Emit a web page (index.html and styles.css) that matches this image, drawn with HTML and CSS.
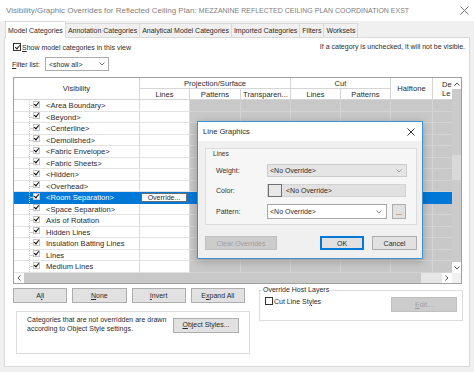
FILE: index.html
```html
<!DOCTYPE html>
<html lang="en">
<head>
<meta charset="UTF-8">
<meta name="viewport" content="width=device-width, initial-scale=1.0">
<title>Visibility/Graphic Overrides</title>
<link rel="stylesheet" href="styles.css">
</head>
<body>
<div class="win">

    <div class="titlebar">
        <span class="title">Visibility/Graphic Overrides for Reflected Ceiling Plan: <span class="caps">MEZZANINE REFLECTED CEILING PLAN COORDINATION EXST</span></span>
        <svg class="xclose" width="9" height="9" viewBox="0 0 9 9"><path d="M0.5 0.5L8.5 8.5M8.5 0.5L0.5 8.5" stroke="#777" stroke-width="1"/></svg>
    </div>

    <div class="tabs">
        <span class="tab on">Model Categories</span>
        <span class="tab">Annotation Categories</span>
        <span class="tab">Analytical Model Categories</span>
        <span class="tab">Imported Categories</span>
        <span class="tab">Filters</span>
        <span class="tab">Worksets</span>
    </div>

    <div class="panel">
        <div class="toprow">
            <span class="chk"><span class="cb on"></span><u>S</u>how model categories in this view</span>
            <span class="hint">If a category is unchecked, it will not be visible.</span>
        </div>

        <div class="filter">
            <span class="flabel"><u>F</u>ilter list:</span>
            <span class="select">&lt;show all&gt;<svg width="6" height="4" viewBox="0 0 6 4"><path d="M0.5 0.5L3 3L5.5 0.5" fill="none" stroke="#777"/></svg></span>
        </div>

        <!-- category grid -->
        <div class="grid">
            <div class="gmain">
                <div class="cols">
                    <div class="ghead">
                        <div class="h vis-h">Visibility</div>
                        <div class="h proj">Projection/Surface</div>
                        <div class="h cut">Cut</div>
                        <div class="h half">Halftone</div>
                        <div class="h det">De<br>Le</div>
                        <div class="h s2">Lines</div>
                        <div class="h s3">Patterns</div>
                        <div class="h s4">Transparen...</div>
                        <div class="h s5">Lines</div>
                        <div class="h s6">Patterns</div>
                    </div>
                    <div class="gbody">
                        <div class="r"><div class="c vis"><span class="tree"></span><span class="gcb"></span>&lt;Area Boundary&gt;</div><div class="c"></div><div class="c g"></div><div class="c g"></div><div class="c g"></div><div class="c g"></div><div class="c g"></div><div class="c g last"></div></div>
                        <div class="r"><div class="c vis"><span class="tree"></span><span class="gcb"></span>&lt;Beyond&gt;</div><div class="c"></div><div class="c g"></div><div class="c g"></div><div class="c g"></div><div class="c g"></div><div class="c g"></div><div class="c g last"></div></div>
                        <div class="r"><div class="c vis"><span class="tree"></span><span class="gcb"></span>&lt;Centerline&gt;</div><div class="c"></div><div class="c g"></div><div class="c g"></div><div class="c g"></div><div class="c g"></div><div class="c g"></div><div class="c g last"></div></div>
                        <div class="r"><div class="c vis"><span class="tree"></span><span class="gcb"></span>&lt;Demolished&gt;</div><div class="c"></div><div class="c g"></div><div class="c g"></div><div class="c g"></div><div class="c g"></div><div class="c g"></div><div class="c g last"></div></div>
                        <div class="r"><div class="c vis"><span class="tree"></span><span class="gcb"></span>&lt;Fabric Envelope&gt;</div><div class="c"></div><div class="c g"></div><div class="c g"></div><div class="c g"></div><div class="c g"></div><div class="c g"></div><div class="c g last"></div></div>
                        <div class="r"><div class="c vis"><span class="tree"></span><span class="gcb"></span>&lt;Fabric Sheets&gt;</div><div class="c"></div><div class="c g"></div><div class="c g"></div><div class="c g"></div><div class="c g"></div><div class="c g"></div><div class="c g last"></div></div>
                        <div class="r"><div class="c vis"><span class="tree"></span><span class="gcb"></span>&lt;Hidden&gt;</div><div class="c"></div><div class="c g"></div><div class="c g"></div><div class="c g"></div><div class="c g"></div><div class="c g"></div><div class="c g last"></div></div>
                        <div class="r"><div class="c vis"><span class="tree"></span><span class="gcb"></span>&lt;Overhead&gt;</div><div class="c"></div><div class="c g"></div><div class="c g"></div><div class="c g"></div><div class="c g"></div><div class="c g"></div><div class="c g last"></div></div>
                        <div class="r sel"><div class="c vis"><span class="tree"></span><span class="gcb"></span>&lt;Room Separation&gt;</div><div class="c ovr"><span class="obtn">Override...</span></div><div class="c g"></div><div class="c g"></div><div class="c g"></div><div class="c g"></div><div class="c g"></div><div class="c g last"></div></div>
                        <div class="r"><div class="c vis"><span class="tree"></span><span class="gcb"></span>&lt;Space Separation&gt;</div><div class="c"></div><div class="c g"></div><div class="c g"></div><div class="c g"></div><div class="c g"></div><div class="c g"></div><div class="c g last"></div></div>
                        <div class="r"><div class="c vis"><span class="tree"></span><span class="gcb"></span>Axis of Rotation</div><div class="c"></div><div class="c g"></div><div class="c g"></div><div class="c g"></div><div class="c g"></div><div class="c g"></div><div class="c g last"></div></div>
                        <div class="r"><div class="c vis"><span class="tree"></span><span class="gcb"></span>Hidden Lines</div><div class="c"></div><div class="c g"></div><div class="c g"></div><div class="c g"></div><div class="c g"></div><div class="c g"></div><div class="c g last"></div></div>
                        <div class="r"><div class="c vis"><span class="tree"></span><span class="gcb"></span>Insulation Batting Lines</div><div class="c"></div><div class="c g"></div><div class="c g"></div><div class="c g"></div><div class="c g"></div><div class="c g"></div><div class="c g last"></div></div>
                        <div class="r"><div class="c vis"><span class="tree"></span><span class="gcb"></span>Lines</div><div class="c"></div><div class="c g"></div><div class="c g"></div><div class="c g"></div><div class="c g"></div><div class="c g"></div><div class="c g last"></div></div>
                        <div class="r"><div class="c vis"><span class="tree"></span><span class="gcb"></span>Medium Lines</div><div class="c"></div><div class="c g"></div><div class="c g"></div><div class="c g"></div><div class="c g"></div><div class="c g"></div><div class="c g last"></div></div>
                    </div>
                </div>
                <div class="vscroll">
                    <span class="sb"><svg width="6" height="4" viewBox="0 0 6 4"><path d="M0.5 3.5L3 1L5.5 3.5" fill="none" stroke="#555"/></svg></span>
                    <span class="vtrack"><span class="vthumb"></span></span>
                    <span class="sb"><svg width="6" height="4" viewBox="0 0 6 4"><path d="M0.5 0.5L3 3L5.5 0.5" fill="none" stroke="#555"/></svg></span>
                </div>
            </div>
            <div class="hscroll">
                <span class="sb"><svg width="4" height="6" viewBox="0 0 4 6"><path d="M3.5 0.5L1 3L3.5 5.5" fill="none" stroke="#555"/></svg></span>
                <span class="hthumb"></span>
                <span class="htrack"></span>
                <span class="sb"><svg width="4" height="6" viewBox="0 0 4 6"><path d="M0.5 0.5L3 3L0.5 5.5" fill="none" stroke="#555"/></svg></span>
                <span class="corner"></span>
            </div>
        </div>

        <div class="lower">
            <div class="lcol">
                <div class="btnrow">
                    <span class="btn">A<u>l</u>l</span>
                    <span class="btn"><u>N</u>one</span>
                    <span class="btn"><u>I</u>nvert</span>
                    <span class="btn">E<u>x</u>pand All</span>
                </div>
                <div class="note">
                    <span class="notetext">Categories that are not overridden are drawn<br>according to Object Style settings.</span>
                    <span class="btn objbtn"><u>O</u>bject Styles...</span>
                </div>
            </div>
            <fieldset class="hostgrp">
                <legend>Override Host Layers</legend>
                <div class="hostrow">
                    <span class="chk"><span class="cb"></span>Cut Line St<u>y</u>les</span>
                    <span class="btn dis editbtn"><u>E</u>dit...</span>
                </div>
            </fieldset>
        </div>
    </div>

    <!-- modal line graphics dialog -->
    <div class="dlg">
        <div class="dtitle">
            <span>Line Graphics</span>
            <svg width="8" height="8" viewBox="0 0 8 8"><path d="M0.5 0.5L7.5 7.5M7.5 0.5L0.5 7.5" stroke="#333" stroke-width="1"/></svg>
        </div>
        <div class="dbody">
            <div class="dgroup">
                <div class="glabel">Lines</div>
                <div class="frow"><span class="flab">Weight:</span><span class="dsel">&lt;No Override&gt;<svg width="6" height="4" viewBox="0 0 6 4"><path d="M0.5 0.5L3 3L5.5 0.5" fill="none" stroke="#999"/></svg></span></div>
                <div class="frow"><span class="flab">Color:</span><span class="colorbtn"><span class="swatch"></span>&lt;No Override&gt;</span></div>
                <div class="frow tall"><span class="flab">Pattern:</span><span class="dsel pat">&lt;No Override&gt;<svg width="6" height="4" viewBox="0 0 6 4"><path d="M0.5 0.5L3 3L5.5 0.5" fill="none" stroke="#888"/></svg></span><span class="btn dots">...</span></div>
            </div>
            <div class="dbtns">
                <span class="btn dis clear">Clear Overrides</span>
                <span class="btn ok">OK</span>
                <span class="btn cancel">Cancel</span>
            </div>
        </div>
    </div>

</div>
</body>
</html>
```

FILE: styles.css
```css
* { box-sizing: border-box; }
body {
    margin: 0;
    font-family: "Liberation Sans", Arial, sans-serif;
    font-size: 7px;
    color: #2b2b2b;
}
u { text-underline-offset: 1px; }

.win {
    width: 474px;
    height: 372px;
    background: #f0f0f0;
    position: relative;
    overflow: hidden;
}

/* title + tabs */
.titlebar {
    height: 21px;
    background: #fff;
    display: flex;
    align-items: center;
    padding: 0 5px 0 6px;
}
.title {
    flex: 1;
    font-size: 8px;
    color: #808080;
    white-space: nowrap;
    overflow: hidden;
}
.title .caps { font-size: 7px; }
.tabs {
    display: flex;
    align-items: flex-end;
    height: 16px;
    padding-left: 5px;
}
.tab {
    height: 14px;
    padding: 0 2px;
    border: 1px solid #d9d9d9;
    border-bottom: none;
    margin-right: -1px;
    display: flex;
    align-items: center;
    background: #f0f0f0;
    white-space: nowrap;
}
.tab.on {
    height: 17px;
    margin-bottom: -1px;
    background: #fff;
    position: relative;
    z-index: 1;
}

.panel {
    margin: 0 4px;
    height: 330px;
    background: #fff;
    border: 1px solid #d9d9d9;
    padding: 4px 4px 0 8px;
}
.toprow {
    height: 10px;
    display: flex;
    align-items: center;
    justify-content: space-between;
}
.chk { display: flex; align-items: center; }
.cb {
    width: 8px;
    height: 8px;
    border: 1px solid #333;
    background: #fff;
    margin-right: 1px;
    position: relative;
}
.cb.on::after {
    content: "";
    position: absolute;
    left: 2px;
    top: 0;
    width: 2px;
    height: 4px;
    border: solid #222;
    border-width: 0 1px 1px 0;
    transform: rotate(40deg);
}
.hint { margin-top: -2px; }

.filter {
    margin-top: 5px;
    height: 14px;
    display: flex;
    align-items: center;
}
.flabel { width: 33px; margin-left: -1px; }
.select {
    width: 64px;
    height: 14px;
    border: 1px solid #acacac;
    display: flex;
    align-items: center;
    justify-content: space-between;
    padding: 0 3px 0 3px;
}

/* grid */
.grid {
    margin-top: 6px;
    width: 449px;
    height: 207px;
    border: 1px solid #a0a0a0;
    font-size: 7.6px;
}
.gmain { display: flex; height: 195px; }
.cols { width: 438px; overflow: hidden; }
.ghead, .r {
    display: grid;
    grid-template-columns: 126px 50px 51px 50px 50px 50px 42px 19px;
}
.ghead { grid-template-rows: 11px 11px; height: 22px; }
.h {
    border-right: 1px solid #d5d5d5;
    border-bottom: 1px solid #d5d5d5;
    display: flex;
    align-items: center;
    justify-content: center;
    white-space: nowrap;
    overflow: hidden;
}
.vis-h { grid-row: 1 / 3; grid-column: 1; }
.proj { grid-row: 1; grid-column: 2 / 5; }
.cut { grid-row: 1; grid-column: 5 / 7; }
.half { grid-row: 1 / 3; grid-column: 7; }
.det {
    grid-row: 1 / 3;
    grid-column: 8;
    border-right: none;
    justify-content: flex-start;
    line-height: 9px;
    padding-left: 9px;
}
.s2 { grid-row: 2; grid-column: 2; }
.s3 { grid-row: 2; grid-column: 3; }
.s4 { grid-row: 2; grid-column: 4; }
.s5 { grid-row: 2; grid-column: 5; }
.s6 { grid-row: 2; grid-column: 6; }

.r { height: 12px; }
.r:nth-child(even) { height: 11px; }
.c {
    border-right: 1px solid #d9d9d9;
    border-bottom: 1px solid #e3e3e3;
}
.c.g { background: #c8c8c8; border-color: #d4d4d4; }
.c.last { border-right: none; }
.vis {
    display: flex;
    align-items: center;
    padding-left: 15px;
    white-space: nowrap;
}
.tree {
    width: 4px;
    height: 100%;
    border-left: 1px dotted #cfcfcf;
    background: linear-gradient(#cfcfcf, #cfcfcf) no-repeat left center / 100% 1px;
}
.gcb {
    width: 7px;
    height: 7px;
    border: 1px solid #c4c4c4;
    background: #fff;
    margin: -3px 6px 0 0;
    position: relative;
}
.gcb::after {
    content: "";
    position: absolute;
    left: 1px;
    top: -1px;
    width: 2px;
    height: 4px;
    border: solid #000;
    border-width: 0 1.5px 1.5px 0;
    transform: rotate(40deg);
}
.sel .c.vis, .sel .c.g, .sel .ovr {
    background: #0078d7;
    border-color: #0078d7;
    color: #fff;
}
.ovr { padding: 1px 2px 1px 1px; }
.obtn {
    display: flex;
    height: 100%;
    align-items: center;
    justify-content: center;
    background: #fff;
    border: 1px solid #6d6d6d;
    color: #2b2b2b;
    font-size: 7px;
}

/* scrollbars */
.vscroll {
    width: 9px;
    display: flex;
    flex-direction: column;
}
.sb {
    flex: none;
    width: 9px;
    height: 11px;
    display: flex;
    align-items: center;
    justify-content: center;
    background: #fff;
}
.vtrack {
    flex: 1;
    background: #cbcbcb;
    padding-top: 66px;
}
.vthumb {
    display: block;
    height: 25px;
    background: #d9d9d9;
}
.hscroll {
    display: flex;
    height: 10px;
}
.hscroll .sb { width: 10px; height: 10px; }
.hthumb { width: 397px; background: #c8c8c8; }
.htrack { flex: 1; background: #e6e6e6; }
.hscroll .corner { width: 9px; background: #f0f0f0; }

/* buttons + groups below the grid */
.btn {
    height: 15px;
    background: #e1e1e1;
    border: 1px solid #adadad;
    display: flex;
    align-items: center;
    justify-content: center;
    white-space: nowrap;
}
.btn.dis {
    background: #cccccc;
    border-color: #bfbfbf;
    color: #9f9f9f;
}
.lower {
    display: flex;
    margin-top: 4px;
}
.lcol { width: 237px; }
.btnrow { display: flex; gap: 5px; }
.btnrow .btn { width: 54.25px; }
.note {
    margin: 8px 0 0 3px;
    width: 234px;
    height: 43px;
    border: 1px solid #dcdcdc;
    display: flex;
    align-items: flex-start;
    padding: 4px 10px 0 10px;
    line-height: 8.5px;
}
.objbtn { margin: 2px 0 0 auto; width: 66px; }

.hostgrp {
    margin: -2px 0 0 9px;
    width: 204px;
    height: 35px;
    border: 1px solid #dcdcdc;
    padding: 0 5px 0 2px;
    min-width: 0;
}
.hostgrp legend {
    padding: 0 1px;
    line-height: 8px;
}
.hostrow {
    display: flex;
    align-items: flex-start;
    padding-left: 3px;
}
.hostrow .chk { margin-top: 3px; height: 8px; }
.editbtn { margin: 3px 0 0 auto; width: 66px; }

/* line graphics dialog */
.dlg {
    position: absolute;
    left: 197px;
    top: 121px;
    width: 226px;
    height: 138px;
    border: 1px solid #3f8fd6;
    box-shadow: 0 2px 8px rgba(0,0,0,0.25);
    background: #f0f0f0;
}
.dtitle {
    height: 19px;
    background: #fff;
    display: flex;
    align-items: center;
    justify-content: space-between;
    padding: 0 7px 0 5px;
    font-size: 7.6px;
}
.dbody { padding: 7px 5px 0 7px; }
.dgroup {
    height: 77px;
    border: 1px solid #dcdcdc;
    background: #f6f6f6;
    padding-top: 1px;
}
.glabel {
    padding-left: 7px;
    line-height: 8px;
    font-size: 6.6px;
    color: #333;
}
.frow {
    display: flex;
    align-items: center;
    height: 13px;
    margin-top: 7px;
    padding-left: 10px;
}
.glabel + .frow { margin-top: 6px; }
.frow.tall { height: 15px; }
.flab { width: 51px; color: #333; }
.dsel {
    width: 140px;
    height: 13px;
    border: 1px solid #cccccc;
    background: #e5e5e5;
    display: flex;
    align-items: center;
    justify-content: space-between;
    padding: 0 4px 0 2px;
}
.dsel.pat {
    width: 120px;
    height: 15px;
    background: #fff;
    border-color: #a8a8a8;
}
.colorbtn {
    width: 139px;
    height: 13px;
    background: #e1e1e1;
    border: 1px solid #d2d2d2;
    display: flex;
    align-items: center;
}
.swatch {
    width: 14px;
    height: 13px;
    margin: -1px 4px 0 0;
    border: 1.5px solid #707070;
    background: #e8e8e8;
}
.dots {
    width: 14px;
    margin-left: 5px;
    align-items: flex-end;
    padding-bottom: 2px;
}
.dbtns {
    display: flex;
    margin-top: 11px;
}
.dbtns .btn { height: 14px; }
.clear { width: 72px; }
.ok {
    width: 44px;
    margin-left: auto;
    border-color: #0078d7;
    box-shadow: inset 0 0 0 1px #0078d7;
}
.cancel { width: 45px; margin-left: 8px; }
```
